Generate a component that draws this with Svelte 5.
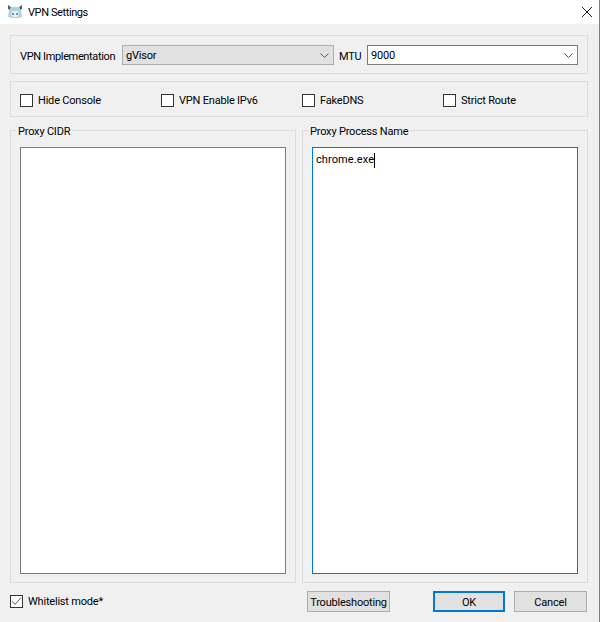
<script>
    let hideConsole = $state(false);
    let enableIpv6 = $state(false);
    let fakeDns = $state(false);
    let strictRoute = $state(false);
    let whitelist = $state(true);

    const options = [
        { label: "Hide Console", get: () => hideConsole, set: (v) => (hideConsole = v) },
        { label: "VPN Enable IPv6", get: () => enableIpv6, set: (v) => (enableIpv6 = v) },
        { label: "FakeDNS", get: () => fakeDns, set: (v) => (fakeDns = v) },
        { label: "Strict Route", get: () => strictRoute, set: (v) => (strictRoute = v) }
    ];
</script>

{#snippet arrow()}
    <svg class="arrow" width="9" height="6" viewBox="0 0 9 6"><path d="M0.5 0.5 L4.5 4.5 L8.5 0.5" fill="none" stroke="#5a5a5a" stroke-width="1" /></svg>
{/snippet}

{#snippet check(label, checked, toggle)}
    <button class="check" onclick={toggle}>
        <span class="box">
            {#if checked}
                <svg width="11" height="11" viewBox="0 0 11 11"><path d="M1 5.2 L4 8.4 L10 1.6" fill="none" stroke="#606060" stroke-width="1" /></svg>
            {/if}
        </span>
        <span>{label}</span>
    </button>
{/snippet}

<div class="window">
    <div class="titlebar">
        <svg class="app-icon" width="16" height="14" viewBox="0 0 16 14">
            <path d="M1 0 L4 2 L3 5 L1 4 Z M15 0 L12 2 L13 5 L15 4 Z" fill="#5c6068" />
            <path d="M4 2 H12 L14 6 L15 12 L11 13 H5 L1 12 L2 6 Z" fill="#a4d4ec" />
            <path d="M5 6 H11 L12 10 L10 12 H6 L4 10 Z" fill="#f6eae6" />
            <rect x="5" y="8" width="2" height="2" fill="#6a94bc" />
            <rect x="9" y="8" width="2" height="2" fill="#6a94bc" />
        </svg>
        <span class="title">VPN Settings</span>
        <svg class="close" width="10" height="10" viewBox="0 0 10 10"><path d="M0 0 L10 10 M10 0 L0 10" stroke="#1a1a1a" stroke-width="1" /></svg>
    </div>

    <div class="content">
        <div class="group row-top">
            <span class="impl-label">VPN Implementation</span>
            <div class="combo impl"><span>gVisor</span>{@render arrow()}</div>
            <span class="mtu-label">MTU</span>
            <div class="combo mtu"><span>9000</span>{@render arrow()}</div>
        </div>

        <div class="group row-checks">
            {#each options as opt}
                <div class="cell">
                    {@render check(opt.label, opt.get(), () => opt.set(!opt.get()))}
                </div>
            {/each}
        </div>

        <div class="lists">
            <fieldset>
                <legend>Proxy CIDR</legend>
                <div class="textbox"></div>
            </fieldset>
            <fieldset>
                <legend>Proxy Process Name</legend>
                <div class="textbox focused">chrome.exe<span class="caret"></span></div>
            </fieldset>
        </div>

        <div class="footer">
            {@render check("Whitelist mode*", whitelist, () => (whitelist = !whitelist))}
            <button class="btn trouble">Troubleshooting</button>
            <button class="btn ok">OK</button>
            <button class="btn cancel">Cancel</button>
        </div>
    </div>
</div>

<style>
    :global(body) {
        margin: 0;
        background: #f0f0f0;
    }

    .window {
        width: 600px;
        height: 622px;
        box-sizing: border-box;
        border-right: 1px solid #7f7f7f;
        display: flex;
        flex-direction: column;
        font-family: "Roboto", "Noto Sans", sans-serif;
        font-size: 11px;
        letter-spacing: -0.2px;
        color: #000;
        overflow: hidden;
    }

    .titlebar {
        height: 24px;
        flex: none;
        background: #fff;
        display: flex;
        align-items: center;
        padding: 0 2px 0 7px;
    }

    .app-icon {
        margin-right: 5px;
    }

    .title {
        flex: 1;
        letter-spacing: -0.4px;
    }

    .close {
        margin-right: 5px;
    }

    .content {
        flex: 1;
        display: flex;
        flex-direction: column;
        padding: 11px 11px 0 10px;
        min-height: 0;
    }

    .group {
        border: 1px solid #dcdcdc;
        display: flex;
        box-sizing: border-box;
    }

    .row-top {
        height: 39px;
        padding: 9px 9px 0;
        align-items: flex-start;
    }

    .impl-label,
    .mtu-label {
        flex: none;
        line-height: 23px;
    }

    .impl-label {
        width: 102px;
        letter-spacing: -0.36px;
    }

    .mtu-label {
        width: 28px;
        margin-left: 5px;
    }

    .combo {
        height: 20px;
        box-sizing: border-box;
        border: 1px solid #7a7a7a;
        display: flex;
        align-items: center;
        justify-content: space-between;
        padding: 1px 4px 0 3px;
        background: #fff;
    }

    .combo.impl {
        width: 212px;
        background: #e1e1e1;
        border-color: #adadad;
    }

    .combo.mtu {
        width: 211px;
    }

    .row-checks {
        margin-top: 7px;
        height: 36px;
        padding: 2px 9px 0;
        align-items: center;
    }

    .cell {
        width: 141px;
        flex: none;
    }

    .check {
        display: flex;
        align-items: center;
        gap: 5px;
        border: none;
        background: none;
        padding: 0;
        font: inherit;
        letter-spacing: inherit;
        color: inherit;
    }

    .box {
        width: 13px;
        height: 13px;
        box-sizing: border-box;
        border: 1px solid #333;
        background: #fff;
        display: flex;
        flex: none;
    }

    .lists {
        margin-top: 3px;
        height: 463px;
        display: flex;
        gap: 6px;
    }

    fieldset {
        flex: 1;
        min-width: 0;
        margin: 0;
        border: 1px solid #dcdcdc;
        padding: 7px 9px 8px;
        display: flex;
        box-sizing: border-box;
    }

    legend {
        padding: 4px 2px 0;
        margin-left: -4px;
        line-height: 16px;
    }

    .textbox {
        flex: 1;
        box-sizing: border-box;
        background: #fff;
        border: 1px solid #7a7a7a;
        padding: 3px 3px;
        line-height: 17px;
    }

    .textbox.focused {
        border-color: #0078d7;
        letter-spacing: 0.1px;
    }

    .caret {
        display: inline-block;
        width: 1px;
        height: 15px;
        background: #000;
        vertical-align: middle;
    }

    .footer {
        margin-top: 8px;
        height: 21px;
        display: flex;
        align-items: center;
    }

    .btn {
        height: 21px;
        box-sizing: border-box;
        background: #e1e1e1;
        border: 1px solid #adadad;
        font: inherit;
        letter-spacing: inherit;
        color: inherit;
        padding: 1px 0 0;
    }

    .trouble {
        width: 83px;
        margin-left: auto;
    }

    .ok {
        width: 72px;
        margin-left: 43px;
        border: 2px solid #0078d7;
    }

    .cancel {
        width: 73px;
        margin-left: 9px;
        margin-right: 1px;
    }
</style>
